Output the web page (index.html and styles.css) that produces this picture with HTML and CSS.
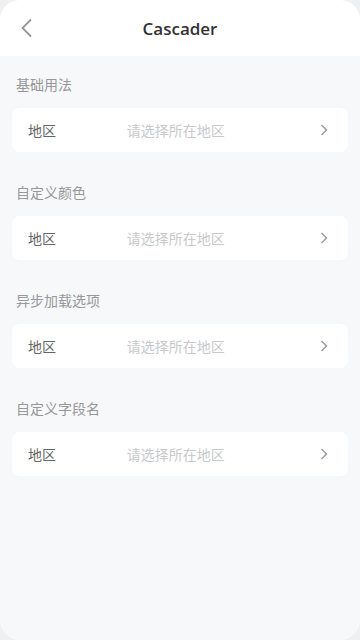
FILE: index.html
```html
<!DOCTYPE html>
<html lang="zh-CN">
<head>
    <meta charset="UTF-8">
    <meta name="viewport" content="width=device-width, initial-scale=1.0">
    <title>Cascader</title>
    <link rel="stylesheet" href="styles.css">
</head>
<body>
    <div class="app">
        <!-- 顶部导航 -->
        <div class="nav-bar">
            <span class="nav-back">
                <svg width="14" height="20" viewBox="0 0 14 20"><path d="M11 1.5 L2.5 10 L11 18.5" fill="none" stroke="#969799" stroke-width="1.8"/></svg>
            </span>
            <div class="nav-title">Cascader</div>
        </div>

        <div class="demo-block">
            <h2 class="demo-title">基础用法</h2>
            <div class="field">
                <span class="field-label">地区</span>
                <span class="field-value">请选择所在地区</span>
                <span class="field-arrow"><svg width="10" height="14" viewBox="0 0 10 14"><path d="M2.5 2 L7.5 7 L2.5 12" fill="none" stroke="#969799" stroke-width="1.4"/></svg></span>
            </div>
        </div>

        <div class="demo-block">
            <h2 class="demo-title">自定义颜色</h2>
            <div class="field">
                <span class="field-label">地区</span>
                <span class="field-value">请选择所在地区</span>
                <span class="field-arrow"><svg width="10" height="14" viewBox="0 0 10 14"><path d="M2.5 2 L7.5 7 L2.5 12" fill="none" stroke="#969799" stroke-width="1.4"/></svg></span>
            </div>
        </div>

        <div class="demo-block">
            <h2 class="demo-title">异步加载选项</h2>
            <div class="field">
                <span class="field-label">地区</span>
                <span class="field-value">请选择所在地区</span>
                <span class="field-arrow"><svg width="10" height="14" viewBox="0 0 10 14"><path d="M2.5 2 L7.5 7 L2.5 12" fill="none" stroke="#969799" stroke-width="1.4"/></svg></span>
            </div>
        </div>

        <div class="demo-block">
            <h2 class="demo-title">自定义字段名</h2>
            <div class="field">
                <span class="field-label">地区</span>
                <span class="field-value">请选择所在地区</span>
                <span class="field-arrow"><svg width="10" height="14" viewBox="0 0 10 14"><path d="M2.5 2 L7.5 7 L2.5 12" fill="none" stroke="#969799" stroke-width="1.4"/></svg></span>
            </div>
        </div>
    </div>
</body>
</html>
```

FILE: styles.css
```css
html, body {
    margin: 0;
    padding: 0;
    height: 100%;
}

body {
    font-family: 'Open Sans', 'Noto Sans CJK SC', sans-serif;
    background-color: #eff0f2;
    color: #323233;
}

.app {
    height: 100%;
    background-color: #f7f8fa;
    border-radius: 20px;
    overflow: hidden;
}

.nav-bar {
    height: 56px;
    background-color: #fff;
    display: flex;
    align-items: center;
    justify-content: center;
    position: relative;
}

.nav-back {
    position: absolute;
    left: 20px;
    top: 18px;
    display: flex;
}

.nav-title {
    font-size: 17px;
    font-weight: 600;
    color: #323233;
}

.demo-title {
    margin: 0;
    padding: 32px 16px 16px;
    font-size: 14px;
    font-weight: normal;
    line-height: 16px;
    color: #969799;
    font-family: 'Noto Sans CJK SC', sans-serif;
}

/* 第一个区块顶部间距小一些 */
.nav-bar + .demo-block .demo-title {
    padding-top: 20px;
}

.field {
    margin: 0 12px;
    height: 44px;
    background-color: #fff;
    border-radius: 8px;
    display: flex;
    align-items: center;
    padding: 0 16px;
    font-size: 14px;
    font-family: 'Noto Sans CJK SC', sans-serif;
}

.field-label {
    width: 6.2em;
    margin-right: 12px;
    color: #646566;
    flex-shrink: 0;
}

.field-value {
    flex: 1;
    color: #c8c9cc;
}

.field-arrow {
    width: 16px;
    display: flex;
    justify-content: center;
}
```
